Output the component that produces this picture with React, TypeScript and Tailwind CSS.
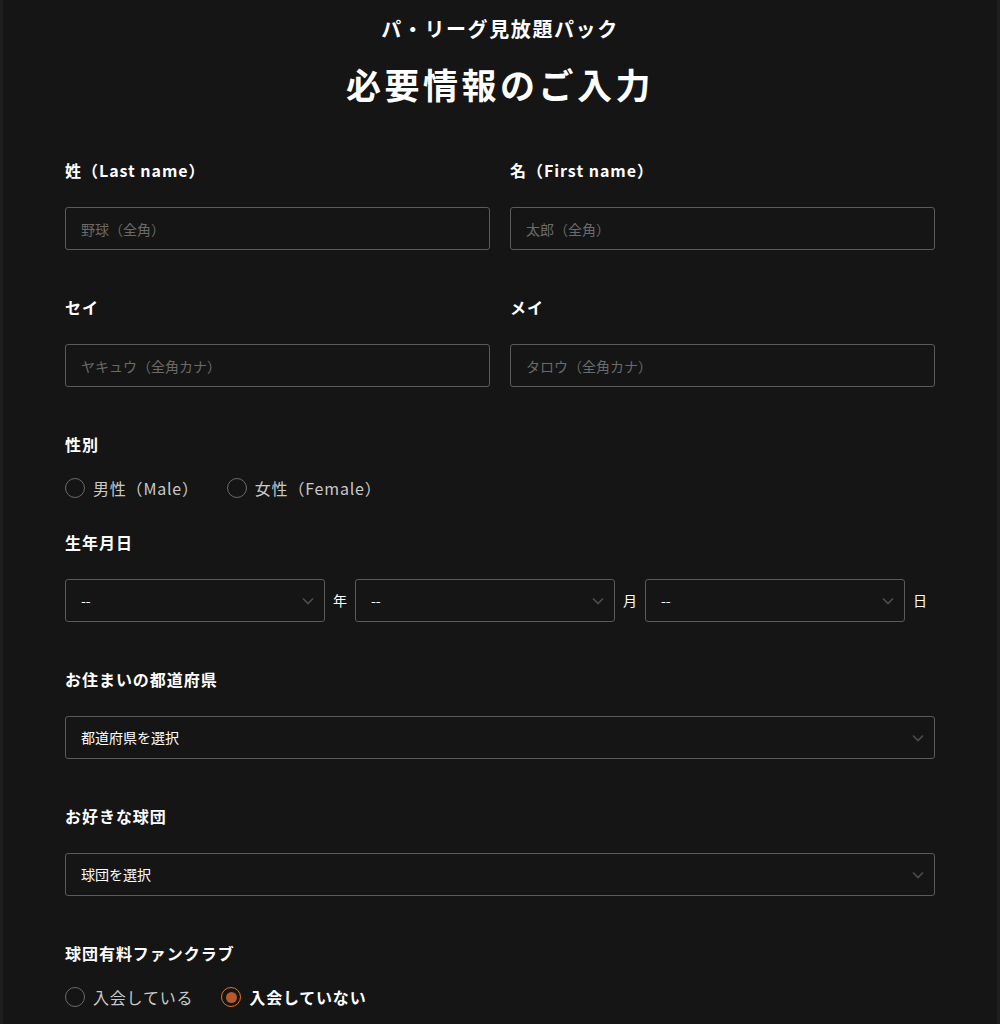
import React, { useState } from "react";

const font = { fontFamily: '"Noto Sans CJK JP", "Noto Sans", sans-serif' };

const Chevron = () => (
  <svg
    width="12"
    height="8"
    viewBox="0 0 12 8"
    fill="none"
    className="pointer-events-none absolute right-[10px] top-1/2 -translate-y-1/2"
  >
    <path d="M1 1.5L6 6.5L11 1.5" stroke="#4d4d4d" strokeWidth="1.6" />
  </svg>
);

const Label = ({ children }: { children: React.ReactNode }) => (
  <p className="text-[16px] font-bold leading-[22px] tracking-[0.06em] text-white">
    {children}
  </p>
);

const TextField = ({ label, placeholder }: { label: string; placeholder: string }) => (
  <div className="flex flex-col">
    <Label>{label}</Label>
    <input
      type="text"
      placeholder={placeholder}
      className="mt-[26px] h-[43px] w-full rounded-[3px] border border-[#5a5a5a] bg-transparent px-[15px] text-[14px] text-white placeholder:text-[#6a6a6a] focus:outline-none"
    />
  </div>
);

const SelectBox = ({ text }: { text: string }) => (
  <div className="relative flex h-[43px] w-full items-center rounded-[3px] border border-[#5a5a5a] pl-[15px] text-[14px] text-white">
    {text}
    <Chevron />
  </div>
);

const Radio = ({
  label,
  checked,
  onClick,
}: {
  label: string;
  checked: boolean;
  onClick: () => void;
}) => (
  <button type="button" onClick={onClick} className="flex h-6 items-center gap-[8px]">
    {checked ? (
      <span className="flex h-5 w-5 items-center justify-center rounded-full border-[1.5px] border-[#e2702a]">
        <span className="h-[11px] w-[11px] rounded-full bg-[#b6592b]" />
      </span>
    ) : (
      <span className="h-5 w-5 rounded-full border-[1.5px] border-[#6b6b6b]" />
    )}
    <span
      className={
        checked
          ? "text-[16px] font-bold tracking-[0.05em] text-white"
          : "text-[16px] tracking-[0.05em] text-[#c9c9c9]"
      }
    >
      {label}
    </span>
  </button>
);

export default function App() {
  const [gender, setGender] = useState("");
  const [fanclub, setFanclub] = useState("no");

  return (
    <div style={font} className="min-h-[1024px] w-full border-x-[3px] border-[#1e1e1e] bg-[#151515]">
      <div className="mx-auto w-[870px] pb-10 pt-[14px]">
        {/* - Heading */}
        <p className="text-center text-[20px] font-bold leading-[30px] tracking-[0.08em] text-white">
          パ・リーグ見放題パック
        </p>
        <h1 className="mt-[14px] text-center text-[35px] font-bold leading-[51px] tracking-[0.1em] text-white">
          必要情報のご入力
        </h1>

        {/* - Name */}
        <div className="mt-[50px] grid grid-cols-2 gap-x-[20px]">
          <TextField label="姓（Last name）" placeholder="野球（全角）" />
          <TextField label="名（First name）" placeholder="太郎（全角）" />
        </div>
        <div className="mt-[46px] grid grid-cols-2 gap-x-[20px]">
          <TextField label="セイ" placeholder="ヤキュウ（全角カナ）" />
          <TextField label="メイ" placeholder="タロウ（全角カナ）" />
        </div>

        {/* - Gender */}
        <div className="mt-[46px]">
          <Label>性別</Label>
          <div className="mt-[21px] flex gap-[28px]">
            <Radio label="男性（Male）" checked={gender === "m"} onClick={() => setGender("m")} />
            <Radio label="女性（Female）" checked={gender === "f"} onClick={() => setGender("f")} />
          </div>
        </div>

        {/* - Birthday */}
        <div className="mt-[31px]">
          <Label>生年月日</Label>
          <div className="mt-[26px] grid grid-cols-3">
            {["年", "月", "日"].map((unit) => (
              <div key={unit} className="flex items-center">
                <SelectBox text="--" />
                <span className="mx-2 shrink-0 text-[14px] text-white">{unit}</span>
              </div>
            ))}
          </div>
        </div>

        {/* - Prefecture */}
        <div className="mt-[46px]">
          <Label>お住まいの都道府県</Label>
          <div className="mt-[26px]">
            <SelectBox text="都道府県を選択" />
          </div>
        </div>

        {/* - Team */}
        <div className="mt-[46px]">
          <Label>お好きな球団</Label>
          <div className="mt-[26px]">
            <SelectBox text="球団を選択" />
          </div>
        </div>

        {/* - Fan club */}
        <div className="mt-[46px]">
          <Label>球団有料ファンクラブ</Label>
          <div className="mt-[21px] flex gap-[28px]">
            <Radio label="入会している" checked={fanclub === "yes"} onClick={() => setFanclub("yes")} />
            <Radio label="入会していない" checked={fanclub === "no"} onClick={() => setFanclub("no")} />
          </div>
        </div>
      </div>
    </div>
  );
}
